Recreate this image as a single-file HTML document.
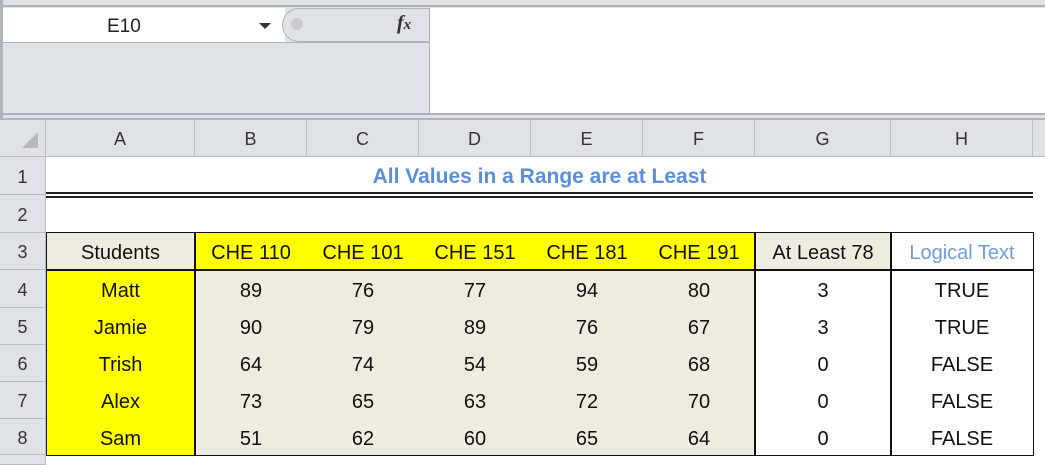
<!DOCTYPE html>
<html><head><meta charset="utf-8"><style>
*{margin:0;padding:0;box-sizing:border-box}
body{width:1045px;height:458px;overflow:hidden;background:#fff;position:relative;font-family:"Liberation Sans",sans-serif;color:#111}
.a{position:absolute}
.c{position:absolute;text-align:center;font-size:20px;display:flex;align-items:center;justify-content:center;white-space:nowrap;overflow:hidden;padding-top:4px}
.h{position:absolute;background:#dfe2e7;border-right:1px solid #b9bcc2;border-bottom:1px solid #b9bcc2;color:#333;font-size:18px;display:flex;align-items:center;justify-content:center;padding-top:3px}
.y{background:#ffff00}.b{background:#eeebe1}
</style></head><body>
<div class="a" style="left:0;top:0;width:1045px;height:120px;background:#dfe2e7"></div>
<div class="a" style="left:0;top:5px;width:1045px;height:2px;background:#b0b4ba"></div>
<div class="a" style="left:0;top:0;width:3px;height:120px;background:#b0b4ba"></div>
<div class="a" style="left:3px;top:8px;width:282px;height:34px;background:#fff"></div>
<div class="a" style="left:107px;top:16px;font-size:19px;color:#222">E10</div>
<div class="a" style="left:259px;top:23px;width:0;height:0;border-left:6px solid transparent;border-right:6px solid transparent;border-top:6px solid #333"></div>
<div class="a" style="left:282px;top:8px;width:148px;height:34px;border:1px solid #b0b4ba;border-right:none;border-radius:17px 0 0 17px;background:#dfe2e7"></div>
<div class="a" style="left:291px;top:18px;width:12px;height:12px;border-radius:6px;background:#c8cace"></div>
<div class="a" style="left:397px;top:12px;font-family:'Liberation Serif',serif;font-style:italic;font-weight:bold;font-size:20px;color:#333">f<span style="font-size:15px">x</span></div>
<div class="a" style="left:3px;top:42px;width:427px;height:1px;background:#b0b4ba"></div>
<div class="a" style="left:429px;top:8px;width:1px;height:105px;background:#b0b4ba"></div>
<div class="a" style="left:430px;top:8px;width:615px;height:105px;background:#fff"></div>
<div class="a" style="left:0;top:113px;width:1045px;height:2px;background:#b0b4ba"></div>
<div class="a" style="left:0;top:118px;width:1045px;height:2px;background:#b0b4ba"></div>

<div class="h" style="left:0;top:120px;width:46px;height:37px"></div>
<div class="a" style="left:22px;top:132px;width:0;height:0;border-left:16px solid transparent;border-bottom:16px solid #b7b9bd"></div>
<div class="h" style="left:46px;top:120px;width:149px;height:37px">A</div>
<div class="h" style="left:195px;top:120px;width:112px;height:37px">B</div>
<div class="h" style="left:307px;top:120px;width:112px;height:37px">C</div>
<div class="h" style="left:419px;top:120px;width:112px;height:37px">D</div>
<div class="h" style="left:531px;top:120px;width:112px;height:37px">E</div>
<div class="h" style="left:643px;top:120px;width:112px;height:37px">F</div>
<div class="h" style="left:755px;top:120px;width:136px;height:37px">G</div>
<div class="h" style="left:891px;top:120px;width:142px;height:37px">H</div>
<div class="h" style="left:1033px;top:120px;width:20px;height:37px"></div>

<div class="h" style="left:0;top:157px;width:46px;height:38px">1</div>
<div class="h" style="left:0;top:195px;width:46px;height:38px">2</div>
<div class="h" style="left:0;top:233px;width:46px;height:37px">3</div>
<div class="h" style="left:0;top:270px;width:46px;height:38px">4</div>
<div class="h" style="left:0;top:308px;width:46px;height:37px">5</div>
<div class="h" style="left:0;top:345px;width:46px;height:37px">6</div>
<div class="h" style="left:0;top:382px;width:46px;height:37px">7</div>
<div class="h" style="left:0;top:419px;width:46px;height:36px">8</div>
<div class="h" style="left:0;top:455px;width:46px;height:10px"></div>

<div class="c" style="left:46px;top:157px;width:987px;height:36px;color:#5b8edb;font-weight:bold;font-size:21px">All Values in a Range are at Least</div>
<div class="a" style="left:46px;top:192px;width:987px;height:2px;background:#222"></div>
<div class="a" style="left:46px;top:196px;width:987px;height:2px;background:#222"></div>

<div class="a b" style="left:46px;top:233px;width:149px;height:37px"></div>
<div class="a y" style="left:195px;top:233px;width:560px;height:37px"></div>
<div class="a b" style="left:755px;top:233px;width:136px;height:37px"></div>
<div class="a y" style="left:46px;top:270px;width:149px;height:185px"></div>
<div class="a b" style="left:195px;top:270px;width:560px;height:185px"></div>
<div class="a" style="left:46px;top:232px;width:988px;height:224px;border:1.5px solid #111"></div>
<div class="a" style="left:46px;top:269px;width:988px;height:1.5px;background:#111"></div>
<div class="a" style="left:194px;top:232px;width:1.5px;height:224px;background:#111"></div>
<div class="a" style="left:754px;top:232px;width:1.5px;height:224px;background:#111"></div>
<div class="a" style="left:890px;top:232px;width:1.5px;height:224px;background:#111"></div>

<div class="c" style="left:46px;top:233px;width:149px;height:37px">Students</div>
<div class="c" style="left:195px;top:233px;width:112px;height:37px">CHE 110</div>
<div class="c" style="left:307px;top:233px;width:112px;height:37px">CHE 101</div>
<div class="c" style="left:419px;top:233px;width:112px;height:37px">CHE 151</div>
<div class="c" style="left:531px;top:233px;width:112px;height:37px">CHE 181</div>
<div class="c" style="left:643px;top:233px;width:112px;height:37px">CHE 191</div>
<div class="c" style="left:755px;top:233px;width:136px;height:37px">At Least 78</div>
<div class="c" style="left:891px;top:233px;width:142px;height:37px;color:#6f9de0">Logical Text</div>

<div class="c" style="left:46px;top:270px;width:149px;height:38px">Matt</div>
<div class="c" style="left:195px;top:270px;width:112px;height:38px">89</div>
<div class="c" style="left:307px;top:270px;width:112px;height:38px">76</div>
<div class="c" style="left:419px;top:270px;width:112px;height:38px">77</div>
<div class="c" style="left:531px;top:270px;width:112px;height:38px">94</div>
<div class="c" style="left:643px;top:270px;width:112px;height:38px">80</div>
<div class="c" style="left:755px;top:270px;width:136px;height:38px">3</div>
<div class="c" style="left:891px;top:270px;width:142px;height:38px">TRUE</div>
<div class="c" style="left:46px;top:308px;width:149px;height:37px">Jamie</div>
<div class="c" style="left:195px;top:308px;width:112px;height:37px">90</div>
<div class="c" style="left:307px;top:308px;width:112px;height:37px">79</div>
<div class="c" style="left:419px;top:308px;width:112px;height:37px">89</div>
<div class="c" style="left:531px;top:308px;width:112px;height:37px">76</div>
<div class="c" style="left:643px;top:308px;width:112px;height:37px">67</div>
<div class="c" style="left:755px;top:308px;width:136px;height:37px">3</div>
<div class="c" style="left:891px;top:308px;width:142px;height:37px">TRUE</div>
<div class="c" style="left:46px;top:345px;width:149px;height:37px">Trish</div>
<div class="c" style="left:195px;top:345px;width:112px;height:37px">64</div>
<div class="c" style="left:307px;top:345px;width:112px;height:37px">74</div>
<div class="c" style="left:419px;top:345px;width:112px;height:37px">54</div>
<div class="c" style="left:531px;top:345px;width:112px;height:37px">59</div>
<div class="c" style="left:643px;top:345px;width:112px;height:37px">68</div>
<div class="c" style="left:755px;top:345px;width:136px;height:37px">0</div>
<div class="c" style="left:891px;top:345px;width:142px;height:37px">FALSE</div>
<div class="c" style="left:46px;top:382px;width:149px;height:37px">Alex</div>
<div class="c" style="left:195px;top:382px;width:112px;height:37px">73</div>
<div class="c" style="left:307px;top:382px;width:112px;height:37px">65</div>
<div class="c" style="left:419px;top:382px;width:112px;height:37px">63</div>
<div class="c" style="left:531px;top:382px;width:112px;height:37px">72</div>
<div class="c" style="left:643px;top:382px;width:112px;height:37px">70</div>
<div class="c" style="left:755px;top:382px;width:136px;height:37px">0</div>
<div class="c" style="left:891px;top:382px;width:142px;height:37px">FALSE</div>
<div class="c" style="left:46px;top:419px;width:149px;height:36px">Sam</div>
<div class="c" style="left:195px;top:419px;width:112px;height:36px">51</div>
<div class="c" style="left:307px;top:419px;width:112px;height:36px">62</div>
<div class="c" style="left:419px;top:419px;width:112px;height:36px">60</div>
<div class="c" style="left:531px;top:419px;width:112px;height:36px">65</div>
<div class="c" style="left:643px;top:419px;width:112px;height:36px">64</div>
<div class="c" style="left:755px;top:419px;width:136px;height:36px">0</div>
<div class="c" style="left:891px;top:419px;width:142px;height:36px">FALSE</div>
</body></html>
